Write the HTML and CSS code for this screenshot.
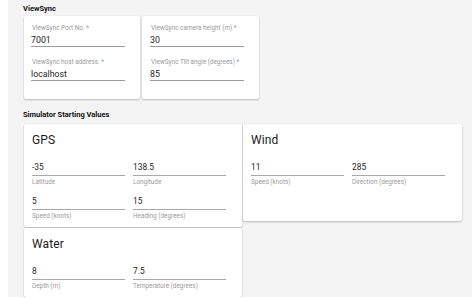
FILE: index.html
```html
<!DOCTYPE html>
<html>
<head>
<meta charset="utf-8">
<link rel="stylesheet" href="styles.css">
</head>
<body>
<div class="page">
  <h2 class="section-title vs-title">ViewSync</h2>
  <div class="vs-row">
    <div class="card vs-card left">
      <div class="tfield">
        <div class="tlabel">ViewSync Port No. *</div>
        <div class="tvalue">7001</div>
      </div>
      <div class="tfield">
        <div class="tlabel">ViewSync host address. *</div>
        <div class="tvalue">localhost</div>
      </div>
    </div>
    <div class="card vs-card right">
      <div class="tfield">
        <div class="tlabel">ViewSync camera height (m) *</div>
        <div class="tvalue">30</div>
      </div>
      <div class="tfield">
        <div class="tlabel">ViewSync Tilt angle (degrees) *</div>
        <div class="tvalue">85</div>
      </div>
    </div>
  </div>

  <h2 class="section-title sim-title">Simulator Starting Values</h2>
  <div class="sim-grid">
    <div class="card sim-card gps">
      <div class="card-title">GPS</div>
      <div class="frow">
        <div class="bfield"><div class="bvalue">-35</div><div class="blabel">Latitude</div></div>
        <div class="bfield"><div class="bvalue">138.5</div><div class="blabel">Longitude</div></div>
      </div>
      <div class="frow">
        <div class="bfield"><div class="bvalue">5</div><div class="blabel">Speed (knots)</div></div>
        <div class="bfield"><div class="bvalue">15</div><div class="blabel">Heading (degrees)</div></div>
      </div>
    </div>
    <div class="card sim-card wind">
      <div class="card-title">Wind</div>
      <div class="frow">
        <div class="bfield"><div class="bvalue">11</div><div class="blabel">Speed (knots)</div></div>
        <div class="bfield"><div class="bvalue">285</div><div class="blabel">Direction (degrees)</div></div>
      </div>
    </div>
    <div class="card sim-card water">
      <div class="card-title">Water</div>
      <div class="frow">
        <div class="bfield"><div class="bvalue">8</div><div class="blabel">Depth (m)</div></div>
        <div class="bfield"><div class="bvalue">7.5</div><div class="blabel">Temperature (degrees)</div></div>
      </div>
    </div>
  </div>
</div>
</body>
</html>
```
FILE: styles.css
```css
html, body {
  margin: 0;
  padding: 0;
  background: #ffffff;
  font-family: Roboto, "Liberation Sans", sans-serif;
}

.page {
  margin: 0 2px 0 8px;
  width: 449px;
  height: 297px;
  padding: 0 0 0 15px;
  background: #f4f4f4;
  overflow: hidden;
}

.section-title {
  margin: 0;
  font-size: 7.5px;
  line-height: 9px;
  font-weight: 700;
  color: #111;
}

.vs-title {
  padding-top: 3.5px;
  height: 12.5px;
}

.vs-row {
  display: flex;
  gap: 2px;
  padding-left: 1px;
}

.card {
  background: #ffffff;
  border-radius: 2px;
  box-shadow: 0 1px 2px rgba(0, 0, 0, 0.24), 0 0 1px rgba(0, 0, 0, 0.1);
  box-sizing: border-box;
}

.vs-card {
  height: 83px;
  padding: 8.5px 0 0 8px;
}

.vs-card.left { width: 116px; }
.vs-card.right { width: 117px; padding-left: 9px; }

.tfield {
  width: 93px;
  margin-bottom: 12px;
}

.tlabel {
  font-size: 6.4px;
  line-height: 7px;
  color: #9a9a9a;
  white-space: nowrap;
  margin-bottom: 3px;
}

.tvalue {
  font-size: 8.8px;
  line-height: 11px;
  color: #262626;
  border-bottom: 1px solid #9a9a9a;
  margin-left: -1px;
}

.sim-title {
  padding-top: 10.5px;
  height: 14.5px;
}

.sim-grid {
  display: grid;
  grid-template-columns: 218px 219px;
  column-gap: 1px;
  row-gap: 1px;
  align-items: start;
  padding-left: 1px;
}

.sim-card {
  padding: 9px 0 0 8px;
}

.gps { height: 103px; }
.wind { height: 97px; }
.water { height: 69px; }

.card-title {
  font-size: 12px;
  line-height: 14px;
  color: #1a1a1a;
  margin-bottom: 14.5px;
  letter-spacing: 0.1px;
}

.frow {
  display: flex;
  gap: 8px;
  margin-bottom: 10.5px;
}

.bfield {
  width: 93px;
}

.bvalue {
  font-size: 8.4px;
  line-height: 11px;
  padding-bottom: 2px;
  color: #262626;
  border-bottom: 1px solid #a8a8a8;
}

.blabel {
  font-size: 6.4px;
  line-height: 7px;
  margin-top: 3px;
  color: #9a9a9a;
  white-space: nowrap;
}
```
